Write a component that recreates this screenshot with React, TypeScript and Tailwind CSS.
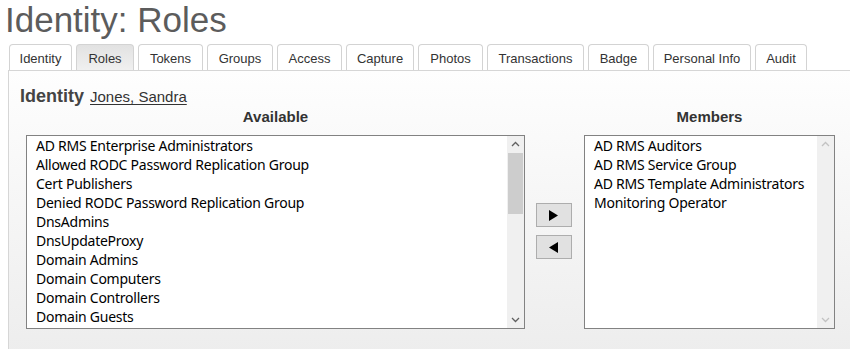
import React from "react";

const tabs: [string, number][] = [
  ["Identity", 63],
  ["Roles", 58],
  ["Tokens", 65],
  ["Groups", 66],
  ["Access", 65],
  ["Capture", 68],
  ["Photos", 65],
  ["Transactions", 97],
  ["Badge", 61],
  ["Personal Info", 98],
  ["Audit", 52],
];

const available = [
  "AD RMS Enterprise Administrators",
  "Allowed RODC Password Replication Group",
  "Cert Publishers",
  "Denied RODC Password Replication Group",
  "DnsAdmins",
  "DnsUpdateProxy",
  "Domain Admins",
  "Domain Computers",
  "Domain Controllers",
  "Domain Guests",
];

const members = [
  "AD RMS Auditors",
  "AD RMS Service Group",
  "AD RMS Template Administrators",
  "Monitoring Operator",
];

function Chevron({ up, color }: { up: boolean; color: string }) {
  return (
    <svg width="9" height="6" viewBox="0 0 9 6">
      <polyline
        points={up ? "1,5 4.5,1.5 8,5" : "1,1 4.5,4.5 8,1"}
        fill="none"
        stroke={color}
        strokeWidth="1.3"
      />
    </svg>
  );
}

function ListBox({
  items,
  width,
  thumb,
}: {
  items: string[];
  width: string;
  thumb: boolean;
}) {
  const arrow = thumb ? "#606060" : "#c2c2c2";
  return (
    <div className={`${width} h-[194px] border border-[#828282] bg-white flex overflow-hidden`}>
      <div
        className="flex-1 pl-[9px] text-[14px] leading-[19px] text-black overflow-hidden"
        style={{ fontFamily: '"Noto Sans", "Open Sans", sans-serif' }}
      >
        {items.map((it) => (
          <div key={it} className="whitespace-nowrap h-[19px] tracking-[-0.25px]">
            {it}
          </div>
        ))}
      </div>
      <div className="w-[17px] bg-[#f0f0f0] flex flex-col items-center">
        <div className="h-[16px] flex items-center justify-center">
          <Chevron up color={arrow} />
        </div>
        {thumb ? (
          <div className="mt-[1px] w-[15px] h-[61px] bg-[#cdcdcd]" />
        ) : null}
        <div className="flex-1" />
        <div className="h-[16px] flex items-center justify-center">
          <Chevron up={false} color={arrow} />
        </div>
      </div>
    </div>
  );
}

function Tri({ right }: { right: boolean }) {
  return (
    <svg width="9" height="11" viewBox="0 0 9 11">
      <polygon points={right ? "0,0 9,5.5 0,11" : "9,0 0,5.5 9,11"} fill="#000" />
    </svg>
  );
}

export default function App() {
  return (
    <div
      className="w-[850px] h-[349px] overflow-hidden bg-white"
      style={{ fontFamily: '"Liberation Sans", Arial, sans-serif' }}
    >
      <div className="h-[44px] pl-[5px] pt-[1px] text-[35px] leading-[38px] text-[#5c5c5c]">
        Identity: Roles
      </div>
      <div className="ml-[9px] flex gap-[4px] h-[26px]">
        {tabs.map(([t, w]) => (
          <div
            key={t}
            style={{ width: w }}
            className={`h-[26px] pt-[2px] flex items-center justify-center rounded-t-[4px] border border-b-0 border-[#d3d3d3] text-[13px] text-[#333] ${
              t === "Roles"
                ? "bg-gradient-to-b from-[#e2e2e2] to-[#f0f0f0]"
                : "bg-white"
            }`}
          >
            {t}
          </div>
        ))}
      </div>
      <div className="ml-[8px] h-[300px] border-l border-t border-[#d6d6d6] bg-gradient-to-b from-[#fefefe] to-[#ececec]">
        <div className="pl-[11px] pt-[12px] flex items-baseline gap-[6px] h-[36px]">
          <span className="text-[18px] font-bold text-[#444]">Identity</span>
          <a className="text-[15px] text-[#333] underline underline-offset-2">
            Jones, Sandra
          </a>
        </div>
        <div className="pl-[17px] flex items-start">
          <div className="flex flex-col">
            <div className="text-center text-[15px] font-bold text-[#333] h-[28px] leading-[20px]">
              Available
            </div>
            <ListBox items={available} width="w-[499px]" thumb />
          </div>
          <div className="w-[59px] self-stretch pt-[26px] flex flex-col items-center justify-center gap-[8px] pr-[2px]">
            <div className="w-[36px] h-[24px] bg-[#e1e1e1] border border-[#adadad] flex items-center justify-center">
              <Tri right />
            </div>
            <div className="w-[36px] h-[24px] bg-[#e1e1e1] border border-[#adadad] flex items-center justify-center">
              <Tri right={false} />
            </div>
          </div>
          <div className="flex flex-col">
            <div className="text-center text-[15px] font-bold text-[#333] h-[28px] leading-[20px]">
              Members
            </div>
            <ListBox items={members} width="w-[251px]" thumb={false} />
          </div>
        </div>
      </div>
    </div>
  );
}
